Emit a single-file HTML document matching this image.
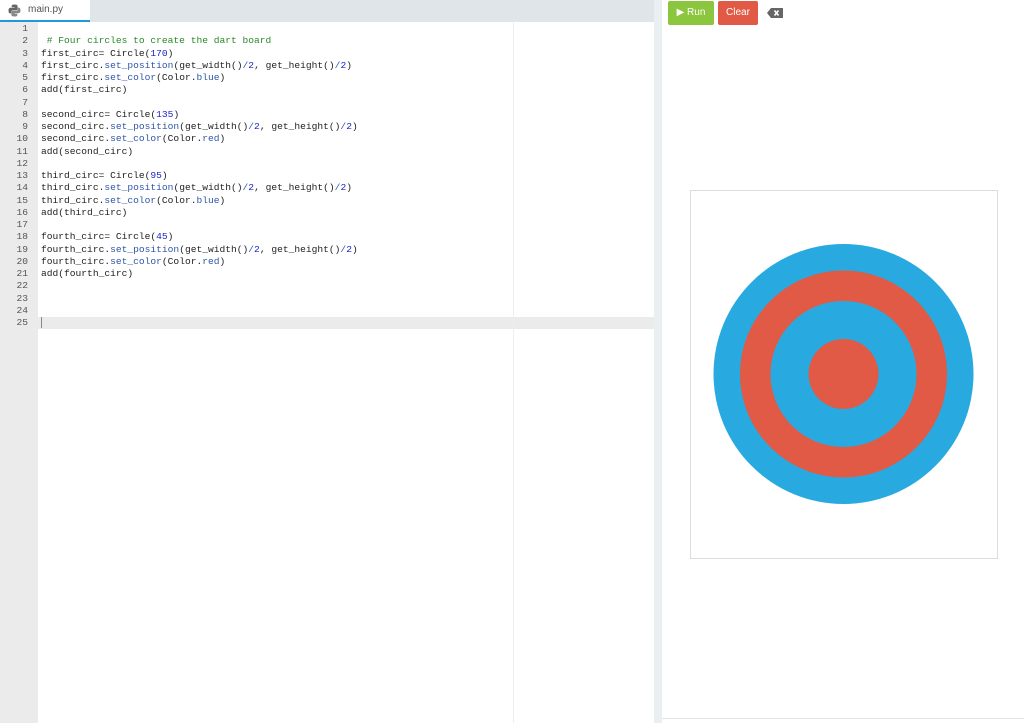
<!DOCTYPE html>
<html><head><meta charset="utf-8"><style>
*{margin:0;padding:0;box-sizing:border-box}
body{width:1024px;height:723px;overflow:hidden;background:#fff;font-family:"Liberation Sans",sans-serif;position:relative}
#tabs{position:absolute;left:0;top:0;width:654px;height:22px;background:#dfe5e8}
#tab{position:absolute;left:0;top:0;width:90px;height:22px;background:#fff;border-bottom:2px solid #1e9ad6;font-size:10px;color:#555;padding:4px 0 0 28px}
#gut{position:absolute;left:0;top:22px;width:38px;height:701px;background:#ebebeb}
#code{position:absolute;left:0;top:23px;width:654px;font-family:"Liberation Mono",monospace;font-size:9.6px;color:#222}
.l{height:12.25px;line-height:12.25px;white-space:pre;position:relative}
.n{display:inline-block;width:28px;text-align:right;color:#555;margin-right:13px}
.c{color:#2a8a2a}.k{color:#2f57a8}.d{color:#1a22c8}
#cur{position:absolute;left:0;top:317px;width:654px;height:12px;background:#ebebeb}
#ln{position:absolute;left:513px;top:22px;width:1px;height:701px;background:#eee}
#strip{position:absolute;left:654px;top:0;width:8px;height:723px;background:#eaeff2}
#panel{position:absolute;left:662px;top:0;width:362px;height:719px;background:#fff;border-bottom:1px solid #e0e4e8}
.btn{position:absolute;top:1px;height:24px;border-radius:2px;color:#fff;font-size:10px;line-height:24px;text-align:center}
#canvas{position:absolute;left:690px;top:190px;width:308px;height:369px;border:1px solid #ddd}
</style></head><body>
<div id="tabs"><div id="tab"><svg style="position:absolute;left:8px;top:4px" width="13" height="13" viewBox="0 0 13 13"><path d="M6.5 0.5C3.5 0.5 3.7 1.8 3.7 1.8V3.3H6.6V3.8H2.5S0.5 3.6 0.5 6.6 2.2 9.4 2.2 9.4H3.3V8S3.2 6.2 5 6.2H8S9.6 6.2 9.6 4.6V2.1S9.9 0.5 6.5 0.5Z" fill="#666"/><path d="M6.5 12.5C9.5 12.5 9.3 11.2 9.3 11.2V9.7H6.4V9.2H10.5S12.5 9.4 12.5 6.4 10.8 3.6 10.8 3.6H9.7V5S9.8 6.8 8 6.8H5S3.4 6.8 3.4 8.4V10.9S3.1 12.5 6.5 12.5Z" fill="#888"/></svg>main.py</div></div>
<div id="gut"></div>
<div id="cur"></div>
<div id="ln"></div>
<div id="code">
<div class="l"><span class="n">1</span></div>
<div class="l"><span class="n">2</span> <span class="c"># Four circles to create the dart board</span></div>
<div class="l"><span class="n">3</span>first_circ= Circle(<span class="d">170</span>)</div>
<div class="l"><span class="n">4</span>first_circ.<span class="k">set_position</span>(get_width()<span class="k">/</span><span class="d">2</span>, get_height()<span class="k">/</span><span class="d">2</span>)</div>
<div class="l"><span class="n">5</span>first_circ.<span class="k">set_color</span>(Color.<span class="k">blue</span>)</div>
<div class="l"><span class="n">6</span>add(first_circ)</div>
<div class="l"><span class="n">7</span></div>
<div class="l"><span class="n">8</span>second_circ= Circle(<span class="d">135</span>)</div>
<div class="l"><span class="n">9</span>second_circ.<span class="k">set_position</span>(get_width()<span class="k">/</span><span class="d">2</span>, get_height()<span class="k">/</span><span class="d">2</span>)</div>
<div class="l"><span class="n">10</span>second_circ.<span class="k">set_color</span>(Color.<span class="k">red</span>)</div>
<div class="l"><span class="n">11</span>add(second_circ)</div>
<div class="l"><span class="n">12</span></div>
<div class="l"><span class="n">13</span>third_circ= Circle(<span class="d">95</span>)</div>
<div class="l"><span class="n">14</span>third_circ.<span class="k">set_position</span>(get_width()<span class="k">/</span><span class="d">2</span>, get_height()<span class="k">/</span><span class="d">2</span>)</div>
<div class="l"><span class="n">15</span>third_circ.<span class="k">set_color</span>(Color.<span class="k">blue</span>)</div>
<div class="l"><span class="n">16</span>add(third_circ)</div>
<div class="l"><span class="n">17</span></div>
<div class="l"><span class="n">18</span>fourth_circ= Circle(<span class="d">45</span>)</div>
<div class="l"><span class="n">19</span>fourth_circ.<span class="k">set_position</span>(get_width()<span class="k">/</span><span class="d">2</span>, get_height()<span class="k">/</span><span class="d">2</span>)</div>
<div class="l"><span class="n">20</span>fourth_circ.<span class="k">set_color</span>(Color.<span class="k">red</span>)</div>
<div class="l"><span class="n">21</span>add(fourth_circ)</div>
<div class="l"><span class="n">22</span></div>
<div class="l"><span class="n">23</span></div>
<div class="l"><span class="n">24</span></div>
<div class="l"><span class="n">25</span><span style="border-left:1px solid #888"> </span></div>
</div>
<div id="strip"></div>
<div id="panel"></div>
<div class="btn" style="left:668px;width:46px;background:#8cc63f">&#9654; Run</div>
<div class="btn" style="left:718px;width:40px;background:#e05a45">Clear</div>
<svg style="position:absolute;left:767px;top:8px" width="17" height="10" viewBox="0 0 17 10"><path d="M4 0H16V10H4L0 5Z" fill="#666"/><path d="M7.5 2.5L11.5 7.5M11.5 2.5L7.5 7.5" stroke="#fff" stroke-width="1.6"/></svg>
<div id="canvas"></div>
<svg style="position:absolute;left:0;top:0" width="1024" height="723"><circle cx="843.5" cy="374" r="130" fill="#28aae1"/><circle cx="843.5" cy="374" r="103.5" fill="#e05a45"/><circle cx="843.5" cy="374" r="73" fill="#28aae1"/><circle cx="843.5" cy="374" r="35" fill="#e05a45"/></svg>
</body></html>
